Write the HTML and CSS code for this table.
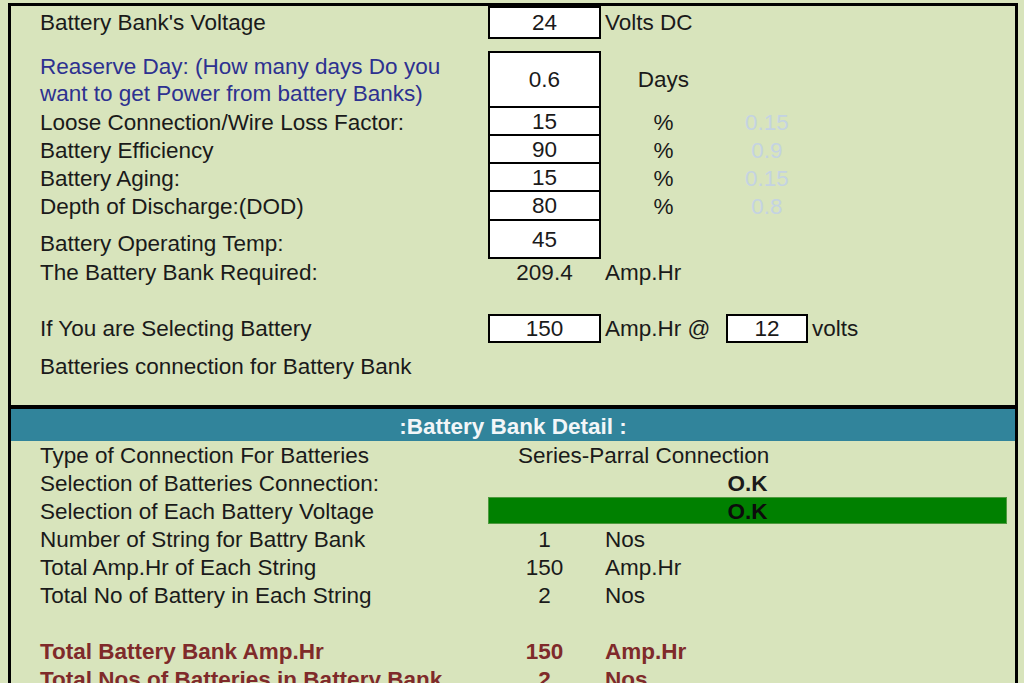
FILE: index.html
```html
<!DOCTYPE html>
<html>
<head>
<meta charset="utf-8">
<link rel="stylesheet" href="styles.css">
</head>
<body>
<div class="sheet">
  <div class="top">
    <div class="row h33">
      <div class="lbl">Battery Bank's Voltage</div>
      <div class="box">24</div>
      <div class="unit-l">Volts DC</div>
    </div>
    <div class="gap12"></div>
    <div class="row h57">
      <div class="lbl blue">Reaserve Day: (How many days Do you<br>want to get Power from battery Banks)</div>
      <div class="box">0.6</div>
      <div class="unit-c">Days</div>
    </div>
    <div class="row h28">
      <div class="lbl">Loose Connection/Wire Loss Factor:</div>
      <div class="box nt">15</div>
      <div class="unit-c">%</div>
      <div class="faint">0.15</div>
    </div>
    <div class="row h28">
      <div class="lbl">Battery Efficiency</div>
      <div class="box nt">90</div>
      <div class="unit-c">%</div>
      <div class="faint">0.9</div>
    </div>
    <div class="row h28">
      <div class="lbl">Battery Aging:</div>
      <div class="box nt">15</div>
      <div class="unit-c">%</div>
      <div class="faint">0.15</div>
    </div>
    <div class="row h29">
      <div class="lbl">Depth of Discharge:(DOD)</div>
      <div class="box nt">80</div>
      <div class="unit-c">%</div>
      <div class="faint">0.8</div>
    </div>
    <div class="row h38 bottom">
      <div class="lbl">Battery Operating Temp:</div>
      <div class="box nt">45</div>
    </div>
    <div class="row h26">
      <div class="lbl">The Battery Bank Required:</div>
      <div class="val">209.4</div>
      <div class="unit-l">Amp.Hr</div>
    </div>
    <div class="row h29"></div>
    <div class="row h29">
      <div class="lbl">If You are Selecting Battery</div>
      <div class="box">150</div>
      <div class="unit-l">Amp.Hr @</div>
      <div class="box">12</div>
      <div class="unit-l">volts</div>
    </div>
    <div class="row h46">
      <div class="lbl">Batteries connection for Battery Bank</div>
    </div>
    <div class="gap16"></div>
  </div>

  <div class="detail">
    <div class="hdr">:Battery Bank Detail :</div>
    <div class="drow">
      <div class="lbl">Type of Connection For Batteries</div>
      <div class="span2 pad30">Series-Parral Connection</div>
    </div>
    <div class="drow">
      <div class="lbl">Selection of Batteries Connection:</div>
      <div class="span2 ok">O.K</div>
    </div>
    <div class="drow">
      <div class="lbl">Selection of Each Battery Voltage</div>
      <div class="span2 ok green">O.K</div>
    </div>
    <div class="drow">
      <div class="lbl">Number of String for Battry Bank</div>
      <div class="val">1</div>
      <div class="unit-l">Nos</div>
    </div>
    <div class="drow">
      <div class="lbl">Total Amp.Hr of Each String</div>
      <div class="val">150</div>
      <div class="unit-l">Amp.Hr</div>
    </div>
    <div class="drow">
      <div class="lbl">Total No of Battery in Each String</div>
      <div class="val">2</div>
      <div class="unit-l">Nos</div>
    </div>
    <div class="drow"></div>
    <div class="drow red">
      <div class="lbl">Total Battery Bank Amp.Hr</div>
      <div class="val">150</div>
      <div class="unit-l">Amp.Hr</div>
    </div>
    <div class="drow red">
      <div class="lbl">Total Nos of Batteries in Battery Bank</div>
      <div class="val">2</div>
      <div class="unit-l">Nos</div>
    </div>
  </div>
</div>
</body>
</html>
```
FILE: styles.css
```css
html, body {
  margin: 0;
  padding: 0;
  background: #d8e4bc;
  overflow: hidden;
}
body {
  font-family: "Liberation Sans", Arial, sans-serif;
  font-size: 22.5px;
  color: #1a1a1a;
  width: 1024px;
  height: 683px;
}
.sheet {
  margin: 3px 0 0 8px;
  width: 1010px;
  box-sizing: border-box;
  border: 3px solid #000;
  border-bottom: 0;
  height: 700px;
}
.top {
  padding-left: 29px;
}
.row {
  display: grid;
  grid-template-columns: 448px 113px 125px 82px 1fr;
  grid-template-rows: 100%;
  align-items: center;
}
.row > div {
  padding-top: 1px;
}
.row.bottom .lbl {
  align-self: end;
  padding-bottom: 2px;
}
.h26 { height: 26px; }
.h28 { height: 28px; }
.h29 { height: 29px; }
.h33 { height: 33px; }
.h38 { height: 38px; }
.h46 { height: 46px; }
.h57 { height: 57px; }
.gap12 { height: 12px; }
.gap16 { height: 16px; }

.lbl {
  white-space: nowrap;
}
.blue {
  color: #2d3190;
  line-height: 27px;
}
.box {
  align-self: stretch;
  display: flex;
  align-items: center;
  justify-content: center;
  background: #fff;
  border: 2px solid #000;
  box-sizing: border-box;
}
.box.nt {
  border-top: 0;
}
.val {
  text-align: center;
}
.unit-l {
  padding-left: 4px;
  white-space: nowrap;
}
.unit-c {
  text-align: center;
}
.faint {
  text-align: center;
  color: #c4d3e2;
}

.detail {
  border-top: 4px solid #000;
}
.hdr {
  height: 32px;
  box-sizing: border-box;
  padding-top: 4px;
  background: #31849b;
  color: #f2f6f8;
  font-weight: bold;
  display: flex;
  align-items: center;
  justify-content: center;
}
.drow {
  display: grid;
  grid-template-columns: 448px 113px 1fr;
  grid-template-rows: 28px;
  align-items: end;
  line-height: 26px;
  height: 28px;
  box-sizing: border-box;
  padding-left: 29px;
  padding-right: 8px;
}
.span2 {
  grid-column: 2 / 4;
  white-space: nowrap;
}
.pad30 {
  padding-left: 30px;
}
.ok {
  text-align: center;
  font-weight: bold;
}
.green {
  align-self: stretch;
  display: flex;
  align-items: center;
  justify-content: center;
  line-height: 22px;
  padding-top: 2px;
  background: #008000;
  border: 1px solid #4f9a3f;
  margin-bottom: 1px;
  box-sizing: border-box;
  color: #0c0c0c;
}
.red {
  color: #7f2a2a;
  font-weight: bold;
}
```
